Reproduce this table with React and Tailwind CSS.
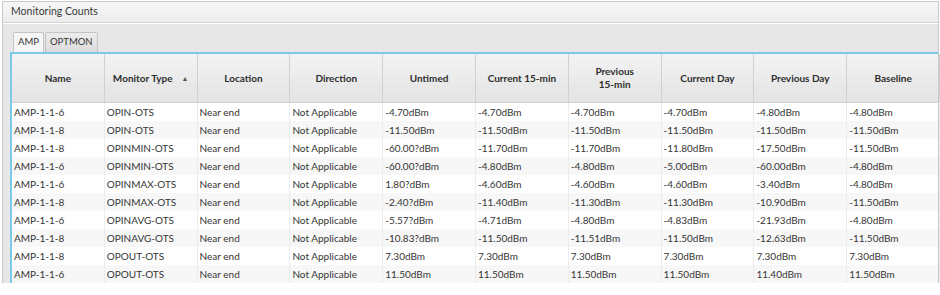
import React from "react";

const cols = [
  { label: ["Name"] },
  { label: ["Monitor Type"], sort: true },
  { label: ["Location"] },
  { label: ["Direction"] },
  { label: ["Untimed"] },
  { label: ["Current 15-min"] },
  { label: ["Previous", "15-min"] },
  { label: ["Current Day"] },
  { label: ["Previous Day"] },
  { label: ["Baseline"] },
];

const rows = [
  ["AMP-1-1-6", "OPIN-OTS", "Near end", "Not Applicable", "-4.70dBm", "-4.70dBm", "-4.70dBm", "-4.70dBm", "-4.80dBm", "-4.80dBm"],
  ["AMP-1-1-8", "OPIN-OTS", "Near end", "Not Applicable", "-11.50dBm", "-11.50dBm", "-11.50dBm", "-11.50dBm", "-11.50dBm", "-11.50dBm"],
  ["AMP-1-1-8", "OPINMIN-OTS", "Near end", "Not Applicable", "-60.00?dBm", "-11.70dBm", "-11.70dBm", "-11.80dBm", "-17.50dBm", "-11.50dBm"],
  ["AMP-1-1-6", "OPINMIN-OTS", "Near end", "Not Applicable", "-60.00?dBm", "-4.80dBm", "-4.80dBm", "-5.00dBm", "-60.00dBm", "-4.80dBm"],
  ["AMP-1-1-6", "OPINMAX-OTS", "Near end", "Not Applicable", "1.80?dBm", "-4.60dBm", "-4.60dBm", "-4.60dBm", "-3.40dBm", "-4.80dBm"],
  ["AMP-1-1-8", "OPINMAX-OTS", "Near end", "Not Applicable", "-2.40?dBm", "-11.40dBm", "-11.30dBm", "-11.30dBm", "-10.90dBm", "-11.50dBm"],
  ["AMP-1-1-6", "OPINAVG-OTS", "Near end", "Not Applicable", "-5.57?dBm", "-4.71dBm", "-4.80dBm", "-4.83dBm", "-21.93dBm", "-4.80dBm"],
  ["AMP-1-1-8", "OPINAVG-OTS", "Near end", "Not Applicable", "-10.83?dBm", "-11.50dBm", "-11.51dBm", "-11.50dBm", "-12.63dBm", "-11.50dBm"],
  ["AMP-1-1-8", "OPOUT-OTS", "Near end", "Not Applicable", "7.30dBm", "7.30dBm", "7.30dBm", "7.30dBm", "7.30dBm", "7.30dBm"],
  ["AMP-1-1-6", "OPOUT-OTS", "Near end", "Not Applicable", "11.50dBm", "11.50dBm", "11.50dBm", "11.50dBm", "11.40dBm", "11.50dBm"],
];

const font = { fontFamily: 'Lato, "Open Sans", sans-serif' };

export default function App() {
  return (
    <div className="w-[940px] h-[295px] bg-white overflow-hidden text-[#333]" style={font}>
      <div className="ml-[2px] mr-[1px] mt-[1px] border-l border-t border-r border-[#c9c9c9]">
        <div className="h-[21px] flex items-center px-[8px] text-[10.5px] text-[#3a3a3a] bg-gradient-to-b from-[#f7f7f7] to-[#ececec] border-b border-[#d2d2d2]">
          Monitoring Counts
        </div>
        <div className="bg-[#e7e7e7] border-t border-white">
          <div className="h-[28px] flex items-end pl-[10px] gap-[1px]">
            <div className="h-[20px] px-[4px] flex items-center text-[9.5px] bg-[#f6f6f6] border border-b-0 border-[#c4c4c4] rounded-t-[2px]">
              AMP
            </div>
            <div className="h-[20px] px-[4px] flex items-center text-[9.5px] bg-gradient-to-b from-[#ececec] to-[#dcdcdc] border border-b-0 border-[#c4c4c4] rounded-t-[2px]">
              OPTMON
            </div>
          </div>
          <div className="ml-[7px] border-l-2 border-t-2 border-[#7ccaea] bg-white">
            <div className="grid grid-cols-[repeat(10,92.8px)] h-[49px] bg-gradient-to-b from-[#f3f3f3] to-[#e3e3e3] border-b border-[#cfcfcf]">
              {cols.map((c, i) => (
                <div
                  key={i}
                  className="flex items-center justify-center text-center text-[10px] font-bold leading-[13px] text-[#2e2e2e] border-r border-[#d0d0d0]"
                >
                  <div>
                    {c.label.map((l, j) => (
                      <div key={j}>{l}</div>
                    ))}
                  </div>
                  {c.sort && <span className="ml-[9px] text-[7px] text-[#555]">▲</span>}
                </div>
              ))}
            </div>
            {rows.map((r, ri) => (
              <div
                key={ri}
                className={`grid grid-cols-[repeat(10,92.8px)] h-[18px] ${ri % 2 === 0 ? "bg-white" : "bg-[#f7f7f7]"}`}
              >
                {r.map((v, ci) => (
                  <div
                    key={ci}
                    className="flex items-center pl-[2px] text-[10px] text-[#353535] border-r border-[#ececec] whitespace-nowrap overflow-hidden"
                  >
                    {v}
                  </div>
                ))}
              </div>
            ))}
          </div>
        </div>
      </div>
    </div>
  );
}
